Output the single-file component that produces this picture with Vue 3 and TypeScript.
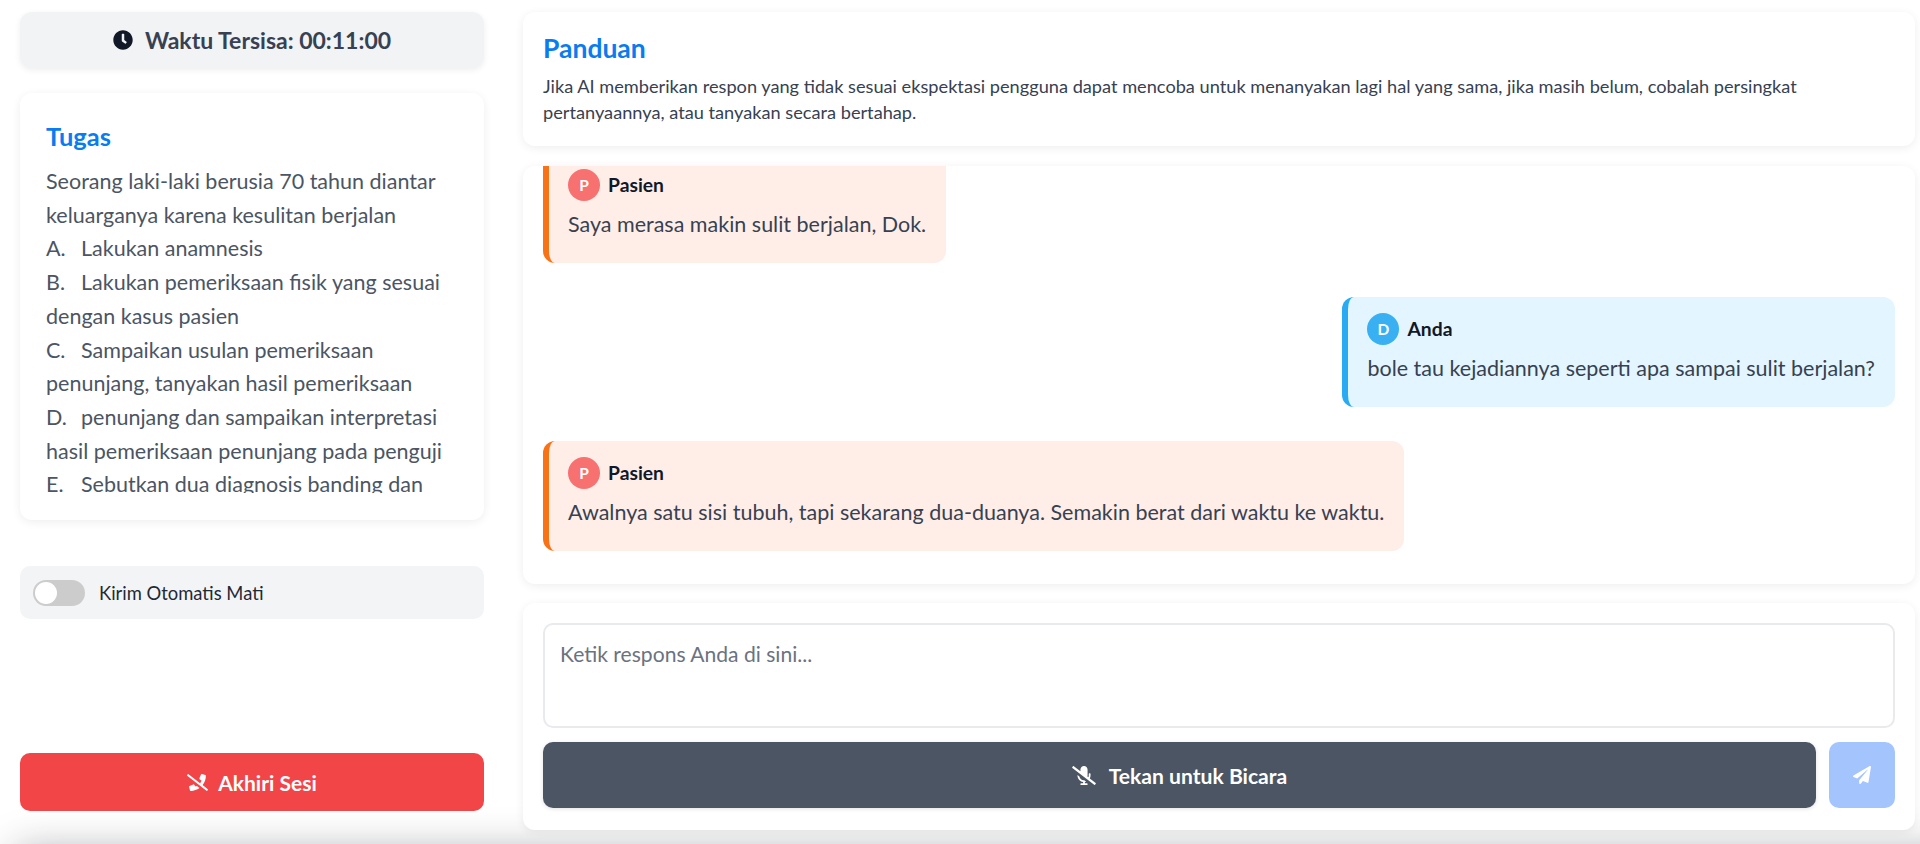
<template>
  <div class="page">
    <aside class="side">
      <div class="timer">
        <svg class="timer-icon" viewBox="0 0 512 512" fill="currentColor">
          <path d="M256,8C119,8,8,119,8,256S119,504,256,504,504,393,504,256,393,8,256,8Zm92.490,313h0l-20,25a16,16,0,0,1-22.490,2.500h0l-67-49.720a40,40,0,0,1-15-31.230V112a16,16,0,0,1,16-16h32a16,16,0,0,1,16,16V256l58,42.500A16,16,0,0,1,348.490,321Z" />
        </svg>
        <span>Waktu Tersisa: {{ timeLeft }}</span>
      </div>

      <section class="task card">
        <h2 class="heading">Tugas</h2>
        <div class="task-body">
          <p v-for="(line, i) in taskLines" :key="i">
            <span v-if="line.mark" class="mark">{{ line.mark }}</span>{{ line.text }}
          </p>
        </div>
      </section>

      <label class="auto-send">
        <span class="switch"><span class="knob"></span></span>
        <span>Kirim Otomatis Mati</span>
      </label>

      <button class="end-btn" type="button">
        <svg class="end-icon" viewBox="0 0 640 512" fill="#fff">
          <path d="M268.200 381.400l-49.600-60.600c-6.800-8.300-18.200-11.100-28-6.900l-112 48c-10.700 4.600-16.500 16.100-13.900 27.500l24 104c2.500 10.800 12.100 18.600 23.400 18.600 100.700 0 193.700-32.400 269.700-86.900l-80-61.800c-10.900 6.900-22.100 13.400-33.600 19zm365.600 76.700L475.100 335.500C537.900 256.400 576 156.900 576 48c0-11.200-7.700-20.900-18.600-23.400l-104-24c-11.300-2.600-22.900 3.300-27.500 13.900l-48 112c-4.200 9.800-1.400 21.200 6.900 28l60.600 49.600c-12.200 26.100-27.900 50.300-46 72.800L45.500 3.400C38.500-2 28.500-.8 23 6.200L3.400 31.400c-5.400 7-4.200 17 2.800 22.400l588.400 454.700c7 5.400 17 4.200 22.500-2.800l19.600-25.300c5.400-6.800 4.100-16.900-2.900-22.300z" />
        </svg>
        <span>Akhiri Sesi</span>
      </button>
    </aside>

    <main class="main">
      <section class="guide card">
        <h2 class="heading guide-title">Panduan</h2>
        <p>Jika AI memberikan respon yang tidak sesuai ekspektasi pengguna dapat mencoba untuk menanyakan lagi hal yang sama, jika masih belum, cobalah persingkat pertanyaannya, atau tanyakan secara bertahap.</p>
      </section>

      <section class="chat card">
        <div class="chat-scroll">
          <div v-for="(msg, i) in messages" :key="i" class="msg" :class="msg.from">
            <div class="msg-head">
              <span class="avatar">{{ msg.from === 'user' ? 'D' : 'P' }}</span>
              <strong>{{ msg.from === 'user' ? 'Anda' : 'Pasien' }}</strong>
            </div>
            <p>{{ msg.text }}</p>
          </div>
        </div>
      </section>

      <section class="composer card">
        <textarea class="input" placeholder="Ketik respons Anda di sini..."></textarea>
        <div class="actions">
          <button class="talk-btn" type="button">
            <svg class="mic-icon" viewBox="0 0 640 512" fill="#fff">
              <path d="M633.820 458.100l-157.800-121.960C488.610 312.130 496 285.010 496 256v-48c0-8.840-7.160-16-16-16h-16c-8.840 0-16 7.160-16 16v48c0 17.920-3.960 34.800-10.720 50.200l-26.550-20.520c3.100-9.400 5.270-19.250 5.270-29.680V96c0-53.020-42.980-96-96-96s-96 42.980-96 96v45.360L45.470 3.370C38.490-2.050 28.430-.8 23.010 6.180L3.370 31.450C-2.050 38.420-.8 48.470 6.180 53.900l588.360 454.730c6.980 5.430 17.030 4.170 22.460-2.810l19.640-25.270c5.420-6.970 4.170-17.020-2.820-22.450zM400 464h-56v-33.770c11.660-1.600 22.850-4.540 33.670-8.310l-50.110-38.730c-6.710.4-13.410.87-20.350.2-55.850-5.450-98.740-48.630-111.180-101.850L144 241.310v6.850c0 89.640 63.970 169.550 152 181.690V464h-56c-8.840 0-16 7.160-16 16v16c0 8.840 7.160 16 16 16h160c8.840 0 16-7.160 16-16v-16c0-8.840-7.160-16-16-16z" />
            </svg>
            <span>Tekan untuk Bicara</span>
          </button>
          <button class="send-btn" type="button" aria-label="Kirim">
            <svg class="send-icon" viewBox="0 0 512 512" fill="#fff">
              <path d="M476 3.200L12.500 270.600c-18.100 10.400-15.800 35.600 2.200 43.200L121 358.400l287.300-253.200c5.500-4.900 13.300 2.600 8.600 8.300L176 407v80.500c0 23.600 28.500 32.900 42.500 15.800L282 426l124.600 52.200c14.200 6 30.400-2.900 33-18.200l72-432C515 7.800 493.300-6.800 476 3.200z" />
            </svg>
          </button>
        </div>
      </section>
    </main>
  </div>
</template>

<script setup lang="ts">
import { ref } from 'vue'

interface Message {
  from: 'patient' | 'user'
  text: string
}

const timeLeft = ref('00:11:00')

const taskLines: { mark?: string; text: string }[] = [
  { text: 'Seorang laki-laki berusia 70 tahun diantar keluarganya karena kesulitan berjalan' },
  { mark: 'A.', text: 'Lakukan anamnesis' },
  { mark: 'B.', text: 'Lakukan pemeriksaan fisik yang sesuai dengan kasus pasien' },
  { mark: 'C.', text: 'Sampaikan usulan pemeriksaan penunjang, tanyakan hasil pemeriksaan' },
  { mark: 'D.', text: 'penunjang dan sampaikan interpretasi hasil pemeriksaan penunjang pada penguji' },
  { mark: 'E.', text: 'Sebutkan dua diagnosis banding dan' }
]

const messages: Message[] = [
  { from: 'patient', text: 'Saya merasa makin sulit berjalan, Dok.' },
  { from: 'user', text: 'bole tau kejadiannya seperti apa sampai sulit berjalan?' },
  { from: 'patient', text: 'Awalnya satu sisi tubuh, tapi sekarang dua-duanya. Semakin berat dari waktu ke waktu.' }
]
</script>

<style>
html,
body {
  margin: 0;
  background: #fff;
  overflow: hidden;
}
</style>

<style scoped>
.page {
  position: relative;
  display: flex;
  gap: 39px;
  box-sizing: border-box;
  height: 844px;
  padding: 12px 5px 14px 20px;
  overflow: hidden;
  font-family: Lato, "Open Sans", sans-serif;
  color: #374151;
  background: #fff;
}

/* soft shadow from something just below the fold */
.page::after {
  content: "";
  position: absolute;
  left: 24px;
  right: -40px;
  top: 860px;
  height: 40px;
  box-shadow: 0 0 40px 8px rgba(20, 24, 40, 0.38);
}

.side,
.main {
  position: relative;
  z-index: 1;
}

.card {
  background: #fff;
  border-radius: 12px;
  box-shadow: 0 2px 10px rgba(0, 0, 0, 0.07);
}

.side {
  display: flex;
  flex-direction: column;
  flex: 0 0 464px;
}

.timer {
  display: flex;
  align-items: center;
  justify-content: center;
  gap: 12px;
  height: 56px;
  border-radius: 12px;
  background: #f1f3f5;
  box-shadow: 0 2px 6px rgba(0, 0, 0, 0.07);
  font-size: 23px;
  font-weight: 700;
}

.timer-icon {
  width: 20px;
  height: 20px;
  color: #111827;
}

.heading {
  margin: 0;
  font-size: 25.500px;
  font-weight: 700;
  line-height: 32px;
  color: #0a7cf0;
}

.guide-title {
  font-size: 26.500px;
}

.task {
  box-sizing: border-box;
  height: 427px;
  margin-top: 25px;
  padding: 27px 26px 0;
}

.task-body {
  height: 328px;
  margin-top: 13px;
  overflow: hidden;
  font-size: 21.500px;
  line-height: 33.700px;
  color: #4b5563;
}

.task-body p {
  margin: 0;
}

.mark {
  display: inline-block;
  width: 35px;
}

.auto-send {
  display: flex;
  align-items: center;
  gap: 14px;
  height: 53px;
  margin-top: 46px;
  padding: 0 13px;
  border-radius: 10px;
  background: #f3f4f5;
  font-size: 18.400px;
  color: #1f2937;
}

.switch {
  display: flex;
  align-items: center;
  width: 52px;
  height: 26px;
  padding: 2px;
  box-sizing: border-box;
  border-radius: 13px;
  background: #cccccd;
}

.knob {
  width: 22px;
  height: 22px;
  border-radius: 50%;
  background: #fff;
}

.end-btn {
  display: flex;
  align-items: center;
  justify-content: center;
  gap: 10px;
  height: 58px;
  margin-top: auto;
  margin-bottom: 19px;
  border: 0;
  border-radius: 10px;
  background: #f24548;
  color: #fff;
  font: 700 21px Lato, "Open Sans", sans-serif;
}

.end-icon {
  width: 21px;
  height: 17px;
}

.main {
  display: flex;
  flex-direction: column;
  flex: 1;
  min-width: 0;
}

.guide {
  box-sizing: border-box;
  height: 134px;
  padding: 20px 20px 0;
}

.guide p {
  margin: 10px 0 0;
  font-size: 18.200px;
  line-height: 25.500px;
  color: #374151;
}

.chat {
  height: 418px;
  margin-top: 20px;
  overflow: hidden;
}

.chat-scroll {
  display: flex;
  flex-direction: column;
  align-items: flex-start;
  gap: 34px;
  padding: 0 20px;
  margin-top: -13.500px;
}

.msg {
  box-sizing: border-box;
  height: 110px;
  padding: 16px 20px 0 19px;
  border-left: 6px solid #f97316;
  border-radius: 12px;
  background: #ffeee8;
}

.msg.user {
  align-self: flex-end;
  border-left-color: #29abf4;
  background: #e3f5fe;
}

.msg-head {
  display: flex;
  align-items: center;
  gap: 8px;
}

.msg-head strong {
  font-size: 19.300px;
  font-weight: 700;
  color: #111827;
}

.avatar {
  display: flex;
  align-items: center;
  justify-content: center;
  width: 32px;
  height: 32px;
  border-radius: 50%;
  background: #f87171;
  color: #fff;
  font-size: 15.500px;
  font-weight: 700;
}

.user .avatar {
  background: #38b0f2;
}

.msg p {
  margin: 8px 0 0;
  font-size: 21.500px;
  line-height: 30px;
  color: #374151;
}

.composer {
  display: flex;
  flex-direction: column;
  gap: 14px;
  box-sizing: border-box;
  height: 227px;
  margin-top: 19px;
  padding: 20px;
}

.input {
  box-sizing: border-box;
  height: 105px;
  padding: 15px;
  border: 2px solid #e8eaed;
  border-radius: 10px;
  resize: none;
  font: 21.100px/28px Lato, "Open Sans", sans-serif;
  color: #374151;
  outline: none;
}

.input::placeholder {
  color: #6b7280;
}

.actions {
  display: flex;
  gap: 13px;
}

.talk-btn {
  display: flex;
  flex: 1;
  align-items: center;
  justify-content: center;
  gap: 13px;
  height: 66px;
  border: 0;
  border-radius: 10px;
  background: #4b5563;
  box-shadow: 0 1px 4px rgba(0, 0, 0, 0.12);
  color: #fff;
  font: 700 21.100px Lato, "Open Sans", sans-serif;
}

.mic-icon {
  width: 24px;
  height: 19px;
}

.send-btn {
  display: flex;
  align-items: center;
  justify-content: center;
  width: 66px;
  height: 66px;
  border: 0;
  border-radius: 10px;
  background: #a3c4fd;
}

.send-icon {
  width: 18px;
  height: 18px;
}
</style>
